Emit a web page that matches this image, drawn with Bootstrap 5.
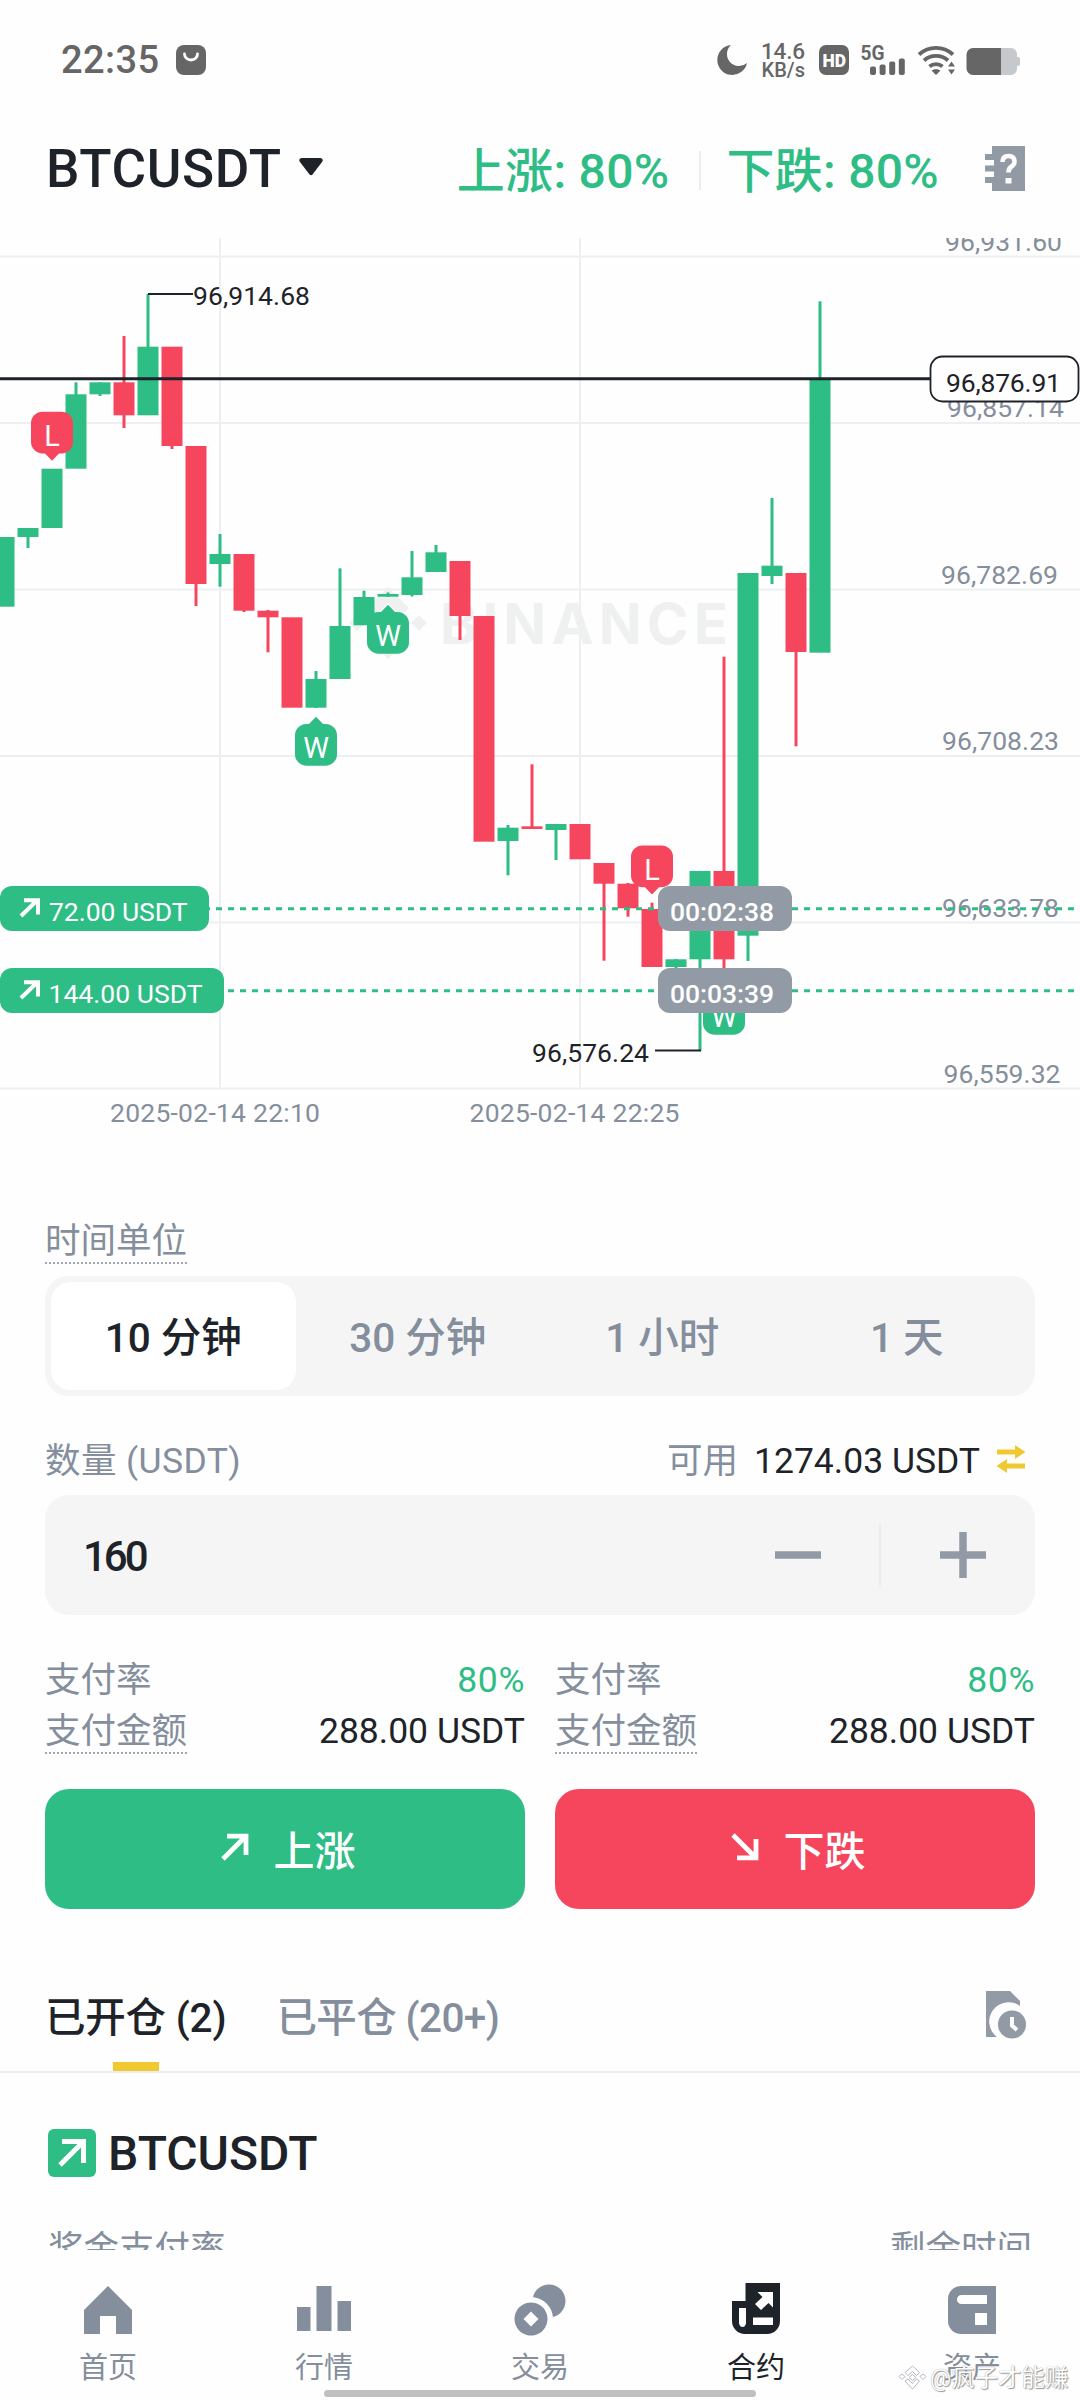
<!DOCTYPE html>
<html lang="zh-CN">
<head>
<meta charset="utf-8">
<meta name="viewport" content="width=device-width, initial-scale=1">
<title>BTCUSDT</title>
<link href="https://cdn.jsdelivr.net/npm/bootstrap@5.3.0/dist/css/bootstrap.min.css" rel="stylesheet">
<style>
:root{--up:#2ebd85;--down:#f6465d;--ink:#1e2329;--mute:#848e9c;--fill:#f5f5f5;--rule:#eaecef;--gold:#f0c931}
body{font-family:Roboto,"Noto Sans CJK SC",sans-serif;color:var(--ink);background:#fefefe;width:1080px;height:2400px;overflow:hidden}
svg{display:block;flex:none}
.c-mute{color:var(--mute)}.c-up{color:var(--up)}
.screen{height:2250px;overflow:hidden}
.statusbar{height:118px;padding:2px 60px 0 61px;color:#666}
.clock{font-size:38px;font-weight:500;letter-spacing:.4px;line-height:44px}
.statusbar .bag{margin-left:17px}
.pairbar{height:118px;padding:0 55px 14px 46px}
.pair{font-size:53px;font-weight:500;line-height:60px;padding-bottom:2px;letter-spacing:.6px}
.caret{margin:-6px 0 0 17px}
.rate{font-size:48px;font-weight:500;line-height:60px;white-space:nowrap;padding-top:4px;letter-spacing:.3px}
.vline{width:2px;background:var(--rule)}
.sect{padding:0 45px}
.t36{font-size:35.5px;line-height:42px}
.dotted{border-bottom:2px dotted #a0a7b1;line-height:42px}
.seg{height:120px;background:var(--fill);border-radius:24px;padding:6px}
.seg .nav-link{font-size:40.5px;font-weight:500;line-height:104px;padding:4px 0 0;color:var(--mute);border-radius:20px}
.seg .nav-link.active{background:#fff;color:var(--ink)}
.amount{height:120px;background:var(--fill);border-radius:24px;padding-left:38px}
.amount .val{font-size:42px;font-weight:500;letter-spacing:-3px;padding-top:2px}
.big{height:120px;border-radius:24px;color:#fff;font-size:41px;font-weight:500;border:0;gap:25px;padding:6px 0 0 6px}
.big.up{background:var(--up)}.big.down{background:var(--down)}
.big svg{margin-top:-11px}
.tabrow{height:104px;border-bottom:2px solid var(--rule);padding:0 53px 0 45px;margin-top:60px}
.tab{font-size:40.5px;font-weight:500;line-height:98px;color:var(--mute);letter-spacing:-.2px}
.tab.on{color:var(--ink)}
.tab .bar{width:46px;height:9px;background:var(--gold);margin:-5px auto 0}
.pos{font-size:48px;font-weight:500;line-height:48px;gap:12px}
.tabbar{height:150px;position:relative}
.tabbar .item{width:216px;font-size:29px;line-height:34px;color:var(--mute);padding-top:30px}
.tabbar .item svg{margin-bottom:15px}
.tabbar .item.on{color:var(--ink)}
.homebar{position:absolute;left:324px;top:140px;width:432px;height:7px;border-radius:4px;background:#bfc1c1}
.stamp{position:absolute;left:898px;top:113px;font-size:23.5px;line-height:30px;color:#fff;text-shadow:0 0 1px #888,1px 1px 1px #999}
</style>
</head>
<body>
<div class="screen">
  <div class="statusbar d-flex align-items-center">
    <span class="clock">22:35</span>
    <svg class="bag" width="30" height="30" viewBox="0 0 30 30"><rect width="30" height="30" rx="8" fill="#666"/><path d="M8.500 9a6.500 6 0 0 0 13 0" fill="none" stroke="#fff" stroke-width="2.800" stroke-linecap="round"/></svg>
    <svg class="ms-auto" width="304" height="56" viewBox="716 32 304 56" fill="#666">
      <path d="M731 45a15 15 0 1 0 16 18a12 12 0 0 1-16-18z"/>
      <g font-family="Roboto" font-weight="500"><text x="761" y="59" font-size="22.500" textLength="44">14.6</text><text x="761.500" y="77" font-size="20" textLength="43.500">KB/s</text></g>
      <rect x="819" y="45" width="30" height="30" rx="7"/><text x="822.500" y="67" font-size="19" font-family="Roboto" font-weight="900" fill="#fff" textLength="23.500" lengthAdjust="spacingAndGlyphs">HD</text>
      <text x="860.500" y="60" font-size="19.500" font-family="Roboto" font-weight="700" textLength="24" lengthAdjust="spacingAndGlyphs">5G</text>
      <rect x="870" y="66.500" width="6" height="8.500" rx="2"/><rect x="879.600" y="64.500" width="6" height="10.500" rx="2"/><rect x="889.200" y="61.500" width="6" height="13.500" rx="2"/><rect x="898.800" y="58.500" width="6" height="16.500" rx="2"/>
      <g fill="none" stroke="#666" stroke-width="3.800"><path d="M919 54.500a25 25 0 0 1 34 0"/><path d="M924 60.500a18 18 0 0 1 24 0"/><path d="M929.500 66.500a10 10 0 0 1 13 0"/></g>
      <path d="M931.500 70.500q4.500-3 9 0l-4.500 4.500zM951.500 61.500l3.500 5h-7zM951.500 74.500l-3.500-5h7z"/>
      <path d="M972 48h39a6 6 0 0 1 6 6v3h1a2 2 0 0 1 2 2v5a2 2 0 0 1-2 2h-1v3a6 6 0 0 1-6 6h-39z" fill="#c6c9cc"/><path d="M1001 48h-28a6.500 6.500 0 0 0-6.500 6.500v14a6.500 6.500 0 0 0 6.500 6.500h28z"/>
    </svg>
  </div>

  <div class="pairbar d-flex align-items-center">
    <span class="pair">BTCUSDT</span>
    <svg class="caret" width="24" height="18" viewBox="0 0 24 18"><path d="M2.500 0h19q3.500 1 1.500 4L13.500 16.500q-1.500 1.500-3 0L1 4q-2-3 1.500-4z" fill="#1e2329"/></svg>
    <div class="rate c-up ms-auto">上涨: 80%</div>
    <div class="vline" style="height:39px;margin:0 25px 0 30px"></div>
    <div class="rate c-up">下跌: 80%</div>
    <svg style="margin:-3px 0 0 46px" width="40" height="46" viewBox="0 0 40 46"><path d="M7 0H40V45H7V37H0V31H7V25.500H0V19.500H7V14H0V8H7z" fill="#929aa5"/><path d="M7 14h2v5.500H7zM7 25.500h2V31H7z" fill="#fefefe"/><path d="M17.500 16q0-6 6-6t6 5.500q0 3-3 5q-3 2-3 6" fill="none" stroke="#fefefe" stroke-width="4.600"/><rect x="20.500" y="32" width="6" height="5.500" fill="#fefefe"/></svg>
  </div>

  <div style="height:904px;padding-top:2px">
  <svg width="1080" height="902" viewBox="0 238 1080 902" font-family="Roboto" font-size="26.500">
    <g fill="#eff1f1">
      <path d="M388 587l21 21-8 8-13-13-13 13-8-8zM388 659l21-21-8-8-13 13-13-13-8 8zM388 614l9 9-9 9-9-9zM419 615l8 8-8 8-8-8zM357 615l8 8-8 8-8-8z"/>
      <text x="440" y="643.500" font-family="Inter" font-weight="700" font-size="56.500" textLength="288">BINANCE</text>
    </g>
    <path d="M0 256.500H1080M0 423H1080M0 589.500H1080M0 756H1080M0 922.500H1080M0 1088.500H1080M220 238V1089M580 238V1089" stroke="#eeeff1" stroke-width="2" fill="none"/>
    <g fill="#848e9c">
      <text x="945" y="250.700" textLength="117">96,931.60</text><text x="947" y="417" textLength="117">96,857.14</text><text x="941" y="583.700" textLength="117">96,782.69</text><text x="942" y="749.700" textLength="117">96,708.23</text><text x="942" y="916.700" textLength="117">96,633.78</text><text x="943.500" y="1082.700" textLength="117">96,559.32</text>
      <text x="110" y="1121.700" textLength="210">2025-02-14 22:10</text><text x="469.500" y="1121.700" textLength="210">2025-02-14 22:25</text>
    </g>
    <g id="candles"></g>
    <path d="M148 294H193M655 1050.500H701" stroke="#1e2329" stroke-width="2"/>
    <g fill="#1e2329"><text x="193" y="305.300" textLength="117">96,914.68</text><text x="532" y="1062" textLength="117">96,576.24</text></g>
    <path d="M0 378.700H930" stroke="#1e2329" stroke-width="3"/>
    <rect x="930.500" y="356.500" width="148" height="45" rx="12" fill="#fefefe" stroke="#1e2329" stroke-width="1.800"/>
    <text x="946" y="392.300" textLength="115" fill="#1e2329">96,876.91</text>
    <defs>
      <path id="pinUp" d="M0 0L7 7.300H9.500a11.500 11.500 0 0 1 11.500 11.500V37.500a11.500 11.500 0 0 1-11.500 11.500H-9.500a11.500 11.500 0 0 1-11.500-11.500V18.800a11.500 11.500 0 0 1 11.500-11.500H-7z"/>
    </defs>
    <g font-size="29" text-anchor="middle" fill="#fff">
      <use href="#pinUp" transform="translate(316 716.700)" fill="#2ebd85"/><text x="316" y="758">W</text>
      <use href="#pinUp" transform="translate(388 604.700)" fill="#2ebd85"/><text x="388" y="646">W</text>
      <use href="#pinUp" transform="translate(724 985.700)" fill="#2ebd85"/><text x="724" y="1027">W</text>
      <use href="#pinUp" transform="translate(52 460.700) scale(1 -1)" fill="#f6465d"/><text x="52" y="445.500">L</text>
      <use href="#pinUp" transform="translate(652 894.500) scale(1 -1)" fill="#f6465d"/><text x="652" y="879.500">L</text>
    </g>
    <path d="M0 908.700H1075M0 990.700H1075" stroke="#2ebd85" stroke-width="3" stroke-dasharray="6 6"/>
    <g fill="#2ebd85"><rect y="886" width="209" height="45" rx="12"/><rect y="968" width="224" height="45" rx="12"/></g>
    <g fill="#929aa5"><rect x="658" y="886" width="134" height="45" rx="12"/><rect x="658" y="968" width="134" height="45" rx="12"/></g>
    <g fill="none" stroke="#fff" stroke-width="4"><path d="M21 916L37 900.500M24 900.200H38V914.500"/><path d="M21 998L37 982.500M24 982.200H38V996.500"/></g>
    <g fill="#fff"><text x="49" y="921" textLength="138.500">72.00 USDT</text><text x="48.500" y="1003" textLength="154">144.00 USDT</text>
    <g font-weight="500"><text x="670" y="921" textLength="104">00:02:38</text><text x="670" y="1003" textLength="104">00:03:39</text></g></g>
  </svg>
  </div>

  <div class="sect">
    <div class="d-flex" style="padding-top:80px"><span class="t36 c-mute dotted">时间单位</span></div>
    <nav class="seg nav nav-pills nav-fill flex-nowrap" style="margin-top:12px">
      <a class="nav-link active w-25">10 分钟</a><a class="nav-link w-25">30 分钟</a><a class="nav-link w-25">1 小时</a><a class="nav-link w-25">1 天</a>
    </nav>
    <div class="t36 d-flex align-items-center" style="margin-top:44px;height:42px">
      <span class="c-mute" style="letter-spacing:.4px">数量 (USDT)</span>
      <span class="c-mute ms-auto">可用</span><span style="margin-left:16px">1274.03 USDT</span>
      <svg style="margin:-5px 9px 0 16px" width="30" height="28" viewBox="0 0 30 28" fill="#f0c931"><path d="M1 4.500H19V0L29.500 7 19 14V9.500H1zM29 18.500H11V14L.5 21 11 28V23.500H29z"/></svg>
    </div>
    <div class="amount d-flex align-items-center" style="margin-top:13px">
      <span class="val">160</span>
      <svg class="ms-auto" width="46" height="46"><path d="M0 23H46" stroke="#929aa5" stroke-width="7.500"/></svg>
      <div class="vline" style="height:61px;margin:0 59px 0 58px"></div>
      <svg style="margin-right:49px" width="46" height="46"><path d="M0 23H46M23 0V46" stroke="#929aa5" stroke-width="7.500"/></svg>
    </div>
    <div class="d-flex" style="gap:30px;margin-top:44px">
      <div class="flex-fill t36">
        <div class="d-flex justify-content-between"><span class="c-mute">支付率</span><span class="c-up" style="letter-spacing:.6px">80%</span></div>
        <div class="d-flex justify-content-between" style="margin-top:9px"><span class="c-mute dotted">支付金额</span><span>288.00 USDT</span></div>
        <button class="big up w-100 d-flex align-items-center justify-content-center" style="margin-top:35px"><svg width="28" height="28" viewBox="0 0 28 28"><path d="M2 26L24 4M6 3.200H25V22" fill="none" stroke="#fff" stroke-width="4.800"/></svg>上涨</button>
      </div>
      <div class="flex-fill t36">
        <div class="d-flex justify-content-between"><span class="c-mute">支付率</span><span class="c-up" style="letter-spacing:.6px">80%</span></div>
        <div class="d-flex justify-content-between" style="margin-top:9px"><span class="c-mute dotted">支付金额</span><span>288.00 USDT</span></div>
        <button class="big down w-100 d-flex align-items-center justify-content-center" style="margin-top:35px"><svg width="28" height="28" viewBox="0 0 28 28"><path d="M2 2L24 24M6 24.800H25V6" fill="none" stroke="#fff" stroke-width="4.800"/></svg>下跌</button>
      </div>
    </div>
  </div>

  <div class="tabrow d-flex">
    <div class="tab on">已开仓 (2)<div class="bar"></div></div>
    <div class="tab" style="margin-left:50px;letter-spacing:-.6px">已平仓 (20+)</div>
    <svg class="ms-auto" style="margin-top:22px" width="42" height="48" viewBox="0 0 42 48"><path d="M1 0H25L35 10V15A18 18 0 0 0 12 46H1z" fill="#929aa5"/><circle cx="27" cy="33.500" r="14" fill="#929aa5"/><path d="M27 26v8.500l5 4.500" fill="none" stroke="#fefefe" stroke-width="4"/></svg>
  </div>
  <div style="padding:55px 48px 0">
    <div class="pos d-flex align-items-center">
      <svg width="48" height="48"><rect width="48" height="48" rx="6" fill="#2ebd85"/><path d="M12 36L34 14M14 12.500H35.500V34" fill="none" stroke="#fff" stroke-width="5"/></svg>
      <span style="padding-top:2px">BTCUSDT</span>
    </div>
    <div class="t36 c-mute d-flex justify-content-between" style="margin-top:50px"><span>奖金支付率</span><span>剩余时间</span></div>
  </div>
</div>

<div class="tabbar d-flex text-center">
  <div class="item d-flex flex-column align-items-center"><svg width="54" height="56" viewBox="81 2280 54 56" fill="#848e9c"><path d="M108 2286L132 2310V2334H116V2316H100V2334H84V2310z"/></svg>首页</div>
  <div class="item d-flex flex-column align-items-center"><svg width="54" height="56" viewBox="297 2280 54 56" fill="#848e9c"><path d="M297 2307h13.500v24H297zM316.500 2286h15v45h-15zM337.500 2301H351v30h-13.500z"/></svg>行情</div>
  <div class="item d-flex flex-column align-items-center"><svg width="54" height="56" viewBox="513 2280 54 56" fill="#848e9c"><circle cx="549" cy="2301" r="16.500"/><circle cx="531" cy="2319" r="22" fill="#fefefe"/><path fill-rule="evenodd" d="M531 2302.500a16.500 16.500 0 1 0 .01 0zM531 2311.500l7.500 7.500-7.500 7.500-7.500-7.500z"/></svg>交易</div>
  <div class="item on d-flex flex-column align-items-center"><svg width="54" height="56" viewBox="729 2280 54 56"><path d="M732 2301H745.500V2283H780V2321a13 13 0 0 1-13 13H745a13 13 0 0 1-13-13z" fill="#1e2329"/><path d="M739 2308h7v15.500q-1 3.500-3.500 3.500t-3.500-3.500zM753 2317.500h20v7.500h-20zM757.500 2292H773v15.500l-4.500-4.500-7.500 7-6-6 7.500-7z" fill="#fefefe"/></svg>合约</div>
  <div class="item d-flex flex-column align-items-center"><svg width="54" height="56" viewBox="945 2280 54 56"><path d="M961 2286H996V2334H961a13 13 0 0 1-13-13V2299a13 13 0 0 1 13-13z" fill="#848e9c"/><path d="M961.500 2295H987v9H961.500a4.500 4.500 0 0 1 0-9zM975 2313h12v12h-12z" fill="#fefefe"/></svg>资产</div>
  <div class="homebar"></div>
  <div class="stamp d-flex align-items-center"><svg width="29" height="28" viewBox="0 0 29 28" style="margin-right:3px"><path d="M7 8.500L14.500 2l7 6.500-3 3-4-4-4.500 4zM1 12.500l3-2.500 3 2.500-3 3zM22 12.500l3-2.500 3 2.500-3 3zM11 13.500l3.500-3 3.500 3-3.500 3zM7 17l3-2 4.500 4.500 4-4.500 3 2-7 8z" fill="#fff" stroke="#b4b8be" stroke-width="1"/></svg><span>@疯子才能赚</span></div>
</div>

<script src="https://cdn.jsdelivr.net/npm/bootstrap@5.3.0/dist/js/bootstrap.bundle.min.js"></script>
<script>
// One row per minute: direction, body top, body bottom, wick top, wick bottom.
const rows=[["g",537,606.7],["g",528,537,528,548],["g",468.7,528],["g",394.3,468.7,382.3,468],["g",382.3,394.3,382.3,396],["r",382.3,415.3,336,428],["g",346.7,415.3,294,415],["r",346.7,446,347,449],["r",446,584,446,606],["g",554,564,534,586.7],["r",554,610.7,554,612],["r",610.7,617.3,610,652.3],["r",617.3,707.7],["g",679,707.7,671,708],["g",626,679,568.3,679],["g",597,625.3,590.7,625],["g",594,596.7,592.5,597],["g",577.3,595,551,596.5],["g",552.3,572,545,572],["r",561,616,561,640],["r",616,841.7],["g",827.7,841,825,875.3],["r",826.3,829,764.3,829],["g",824,830,824,860],["r",824,859.3],["r",863,883.7,863,960.7],["r",883.7,908.3,883,916.7],["r",909,967,902.7,967],["g",959.3,967,959,968],["g",871,959.3,871,1050.7],["r",871,959.3,656.7,985],["g",573,935.7,573,961],["g",565.7,576,498,584],["r",573,652,573,746.3],["g",378.7,652.7,301.3,652]];
document.getElementById("candles").innerHTML=rows.map(([d,t,b,wt,wb],i)=>{
  const x=4+24*i;
  return `<g fill="${d==="g"?"#2ebd85":"#f6465d"}"><rect x="${x-10.5}" y="${t}" width="21" height="${b-t}"/>${wt?`<rect x="${x-1.5}" y="${wt}" width="3" height="${wb-wt}"/>`:""}</g>`;
}).join("");
</script>
</body>
</html>
